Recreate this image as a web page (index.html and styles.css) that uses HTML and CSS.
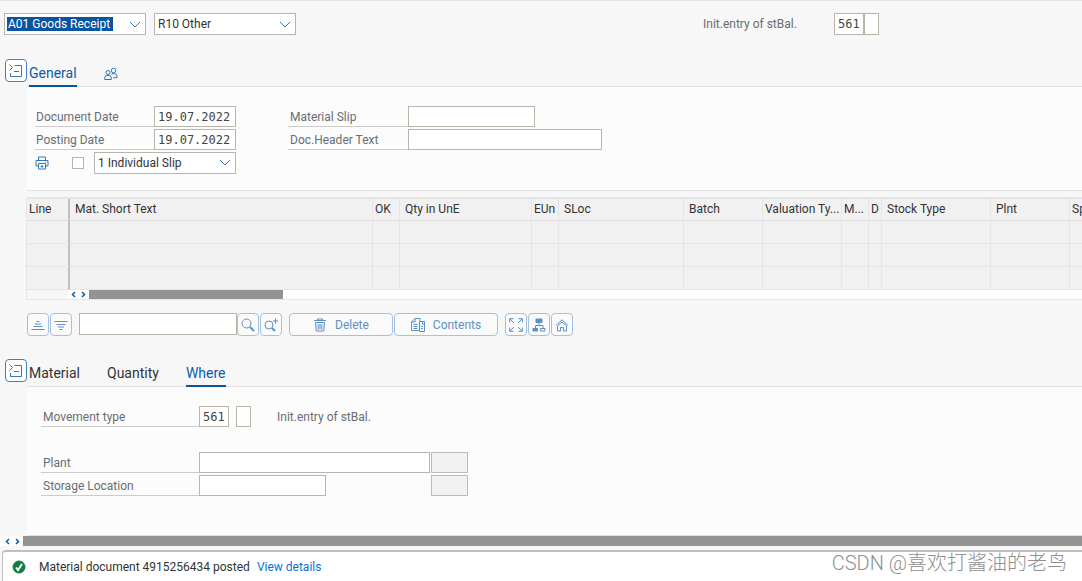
FILE: index.html
```
<!DOCTYPE html>
<html lang="en">
<head>
    <meta charset="UTF-8">
    <meta name="viewport" content="width=device-width, initial-scale=1.0">
    <title>Goods Receipt</title>
    <link rel="stylesheet" href="styles.css">
</head>
<body>
    <header class="topbar">
        <select class="dropdown selected" aria-label="Transaction">
            <option>A01 Goods Receipt</option>
        </select>
        <select class="dropdown" aria-label="Reference">
            <option>R10 Other</option>
        </select>
        <div class="movement">
            <label for="mvt">Init.entry of stBal.</label>
            <input type="text" class="field code" id="mvt" value="561">
            <input type="text" class="field flag" aria-label="Special stock">
        </div>
    </header>

    <!-- Header data -->
    <section class="section">
        <button class="toggle" aria-label="Collapse header">
            <svg width="16" height="16" viewBox="0 0 16 16"><path d="M1.500 1.500l3 3-3 3M6.500 2.500h7v11h-11V10M6 8.500h5"/></svg>
        </button>
        <div class="content">
            <nav class="tabs">
                <a href="#" class="tab active">General</a>
                <a href="#" class="tab icon-tab" aria-label="Partners">
                    <svg width="14" height="14" viewBox="0 0 14 14"><circle cx="9.500" cy="3.500" r="2.300"/><circle cx="4" cy="5.500" r="2"/><path d="M.7 12.500V11q0-2.500 2.300-2.500h2Q7.300 8.500 7.300 11v1.500zM7.300 7.500q.5-.8 1.700-.8h1.500q2.500 0 2.500 2.500v1.500H9"/></svg>
                </a>
            </nav>
            <div class="panel general">
                <div class="column">
                    <div class="row"><label class="lbl" for="docdate">Document Date</label><input type="text" class="field date" id="docdate" value="19.07.2022"></div>
                    <div class="row"><label class="lbl" for="postdate">Posting Date</label><input type="text" class="field date" id="postdate" value="19.07.2022"></div>
                    <div class="row print">
                        <svg width="14" height="14" viewBox="0 0 14 14"><path d="M3.500 4V1h7v3M3.500 10H1V4.500h12V10h-2.500M3.500 7.500h7v5.500h-7zM6 10h2v1H6zM10.500 6.200h1"/></svg>
                        <input type="checkbox" class="check" aria-label="Print">
                        <select class="dropdown" aria-label="Slip type">
                            <option>1 Individual Slip</option>
                        </select>
                    </div>
                </div>
                <div class="column texts">
                    <div class="row"><label class="lbl" for="slip">Material Slip</label><input type="text" class="field medium" id="slip"></div>
                    <div class="row"><label class="lbl" for="htext">Doc.Header Text</label><input type="text" class="field long" id="htext"></div>
                </div>
            </div>
        </div>
    </section>

    <!-- Item overview -->
    <section class="items">
        <div class="grid">
            <table>
                <thead>
                    <tr>
                        <th class="line">Line</th><th class="text">Mat. Short Text</th><th class="tiny">OK</th><th class="qty">Qty in UnE</th><th class="tiny">EUn</th><th class="sloc">SLoc</th><th class="mid">Batch</th><th class="mid near">Valuation Ty...</th><th class="tiny">M...</th><th class="one">D</th><th class="stock">Stock Type</th><th class="mid">Plnt</th><th class="tiny last">Sp</th>
                    </tr>
                </thead>
                <tbody>
                    <tr><td></td><td></td><td></td><td></td><td></td><td></td><td></td><td></td><td></td><td></td><td></td><td></td><td></td></tr>
                    <tr><td></td><td></td><td></td><td></td><td></td><td></td><td></td><td></td><td></td><td></td><td></td><td></td><td></td></tr>
                    <tr><td></td><td></td><td></td><td></td><td></td><td></td><td></td><td></td><td></td><td></td><td></td><td></td><td></td></tr>
                </tbody>
            </table>
            <div class="scroll">
                <button class="arrow" aria-label="Scroll left"><svg width="5" height="7" viewBox="0 0 5 7"><path d="M4 1L1.500 3.500 4 6"/></svg></button>
                <button class="arrow" aria-label="Scroll right"><svg width="5" height="7" viewBox="0 0 5 7"><path d="M1 1l2.500 2.500L1 6"/></svg></button>
                <div class="thumb"></div>
            </div>
        </div>
        <div class="toolbar">
            <div class="group">
                <button class="btn" aria-label="Sort ascending"><svg width="14" height="14" viewBox="0 0 14 14"><path d="M5.500 3.500h3M4 6h6M2.500 8.500h9M.5 11.500h13"/></svg></button>
                <button class="btn" aria-label="Sort descending"><svg width="14" height="14" viewBox="0 0 14 14"><path d="M.5 3.500h13M2.500 6.500h9M4 9h6M5.500 11.500h3"/></svg></button>
            </div>
            <div class="group">
                <input type="text" class="field search" aria-label="Search">
                <button class="btn" aria-label="Find"><svg width="14" height="14" viewBox="0 0 14 14"><circle cx="5.500" cy="5.500" r="4.500"/><path class="thick" d="M9 9l4 4"/></svg></button>
                <button class="btn" aria-label="Find next"><svg width="14" height="14" viewBox="0 0 14 14"><circle cx="5" cy="7" r="4"/><path class="thick" d="M8 10l3 3"/><path d="M11.500 .5v5M9 3h5"/></svg></button>
            </div>
            <div class="group">
                <button class="btn wide"><svg width="14" height="14" viewBox="0 0 14 14"><path d="M1 2.500h12M4.500 2.500v-1.500h5v1.500M2.500 4.500l.8 8.500h7.400l.8-8.500zM5.200 6v5.500M7 6v5.500M8.800 6v5.500"/></svg>Delete</button>
                <button class="btn wide"><svg width="14" height="14" viewBox="0 0 14 14"><path d="M9 3V.5H4L.5 4v8.500h8M4 .5V4H.5M2.500 6.500h4M2.500 8.500h4M2.500 10.500h4M8.500 3.500h5v10h-5zM11.500 3.500V6h2M10 8.500h2M10 10.500h2"/></svg>Contents</button>
            </div>
            <div class="group">
                <button class="btn" aria-label="Expand"><svg width="14" height="14" viewBox="0 0 14 14"><path d="M.7 4.500V.7h3.800M1 1l4 4M9.500.7h3.800v3.800M13 1L9 5M.7 9.500v3.800h3.800M1 13l4-4M13.300 9.500v3.800H9.500M13 13L9 9"/></svg></button>
                <button class="btn" aria-label="Hierarchy"><svg width="14" height="14" viewBox="0 0 14 14"><path class="fill" d="M4 1h6v3.500H4zM1 10.500h4.500v2.500H1z"/><path d="M7 5v2.500M3.500 10V7.500h7.500V10M8.500 10.500h4.500v2.500h-4.500z"/></svg></button>
                <button class="btn" aria-label="Home"><svg width="14" height="14" viewBox="0 0 14 14"><path d="M.8 7.500L7 1.800l6.200 5.700M2.500 8v5h3V9.500h3V13h3V8L7 4z"/></svg></button>
            </div>
        </div>
    </section>

    <!-- Item detail -->
    <section class="section detail">
        <button class="toggle" aria-label="Collapse detail">
            <svg width="16" height="16" viewBox="0 0 16 16"><path d="M1.500 1.500l3 3-3 3M6.500 2.500h7v11h-11V10M6 8.500h5"/></svg>
        </button>
        <div class="content">
            <nav class="tabs">
                <a href="#" class="tab">Material</a>
                <a href="#" class="tab">Quantity</a>
                <a href="#" class="tab active">Where</a>
            </nav>
            <div class="panel where">
                <div class="row spaced">
                    <label class="lbl" for="itemmvt">Movement type</label><input type="text" class="field code" id="itemmvt" value="561">
                    <input type="text" class="field flag" aria-label="Item special stock">
                    <span class="note">Init.entry of stBal.</span>
                </div>
                <div class="row">
                    <label class="lbl" for="plant">Plant</label>
                    <div class="slot"><input type="text" class="field full" id="plant"></div>
                    <input type="text" class="field key" aria-label="Plant key" readonly>
                </div>
                <div class="row">
                    <label class="lbl" for="storage">Storage Location</label>
                    <div class="slot"><input type="text" class="field medium" id="storage"></div>
                    <input type="text" class="field key" aria-label="Storage location key" readonly>
                </div>
            </div>
        </div>
    </section>

    <div class="scroll page-scroll">
        <button class="arrow" aria-label="Scroll page left"><svg width="5" height="7" viewBox="0 0 5 7"><path d="M4 1L1.500 3.500 4 6"/></svg></button>
        <button class="arrow" aria-label="Scroll page right"><svg width="5" height="7" viewBox="0 0 5 7"><path d="M1 1l2.500 2.500L1 6"/></svg></button>
        <div class="thumb"></div>
    </div>

    <footer class="status">
        <svg width="14" height="14" viewBox="0 0 14 14"><circle cx="7" cy="7" r="6"/><path d="M4 7.500l2 2.500 4-6"/></svg>
        <span>Material document 4915256434 posted</span>
        <a href="#">View details</a>
        <div class="watermark">CSDN @喜欢打酱油的老鸟</div>
    </footer>
</body>
</html>
```

FILE: styles.css
```
* {
    box-sizing: border-box;
}
body {
    margin: 0;
    min-height: 100vh;
    display: flex;
    flex-direction: column;
    overflow-x: hidden;
    background-color: #f7f7f7;
    color: #333;
    font-family: Roboto, "Liberation Sans", sans-serif;
    font-size: 12px;
    line-height: 16px;
}
button, input, select {
    font: inherit;
    color: inherit;
    margin: 0;
    padding: 0;
}
button {
    cursor: pointer;
}
a {
    text-decoration: none;
}
svg {
    display: block;
    flex: none;
    fill: none;
    stroke: currentColor;
}

/* form fields */
.field {
    height: 21px;
    padding: 0 3px;
    border: 1px solid #bab5aa;
    background: #fff;
    color: #444;
    font-family: "DejaVu Sans Mono", monospace;
}
.dropdown {
    appearance: none;
    width: 142px;
    height: 22px;
    padding: 0 3px;
    border: 1px solid #bab5aa;
    border-radius: 0;
    background: #fff url("data:image/svg+xml,%3Csvg xmlns='http://www.w3.org/2000/svg' width='12' height='7' fill='none' stroke='%233a78bd'%3E%3Cpath d='M1 1l5 5 5-5'/%3E%3C/svg%3E") no-repeat right 4px center;
}
.selected {
    color: #fff;
    background-image: url("data:image/svg+xml,%3Csvg xmlns='http://www.w3.org/2000/svg' width='12' height='7' fill='none' stroke='%233a78bd'%3E%3Cpath d='M1 1l5 5 5-5'/%3E%3C/svg%3E"), linear-gradient(#0854a0, #0854a0);
    background-position: right 4px center, 2px 3px;
    background-size: 12px 7px, 106px 14px;
}
.code {
    width: 30px;
}
.flag {
    width: 15px;
}
.date {
    width: 82px;
}
.medium {
    width: 127px;
}
.long {
    width: 194px;
}
.full {
    width: 100%;
}
.key {
    width: 37px;
    border-color: #b8bcc0;
    background: #f2f2f2;
}
.check {
    appearance: none;
    width: 12px;
    height: 12px;
    border: 1px solid #b5b5b5;
    background: #fff;
}

.topbar {
    display: flex;
    align-items: center;
    gap: 8px;
    height: 58px;
    padding: 0 4px 11px;
    border-top: 1px solid #e2e2e2;
}
.movement {
    display: flex;
    align-items: center;
    margin-left: 399px;
    color: #6a6d70;
}
.movement label {
    width: 131px;
}
.movement .field {
    height: 22px;
}

/* tabbed sections */
.section {
    display: flex;
    align-items: flex-start;
    padding: 1px 0 0 5px;
}
.toggle {
    display: flex;
    align-items: center;
    justify-content: center;
    flex: none;
    width: 22px;
    height: 23px;
    border: 1px solid #4080be;
    border-radius: 4px;
    background: #fff;
    color: #3576b8;
}
.content {
    flex: 1;
    min-width: 0;
}
.tabs {
    display: flex;
    gap: 27px;
    height: 28px;
    padding-left: 2px;
    border-bottom: 1px solid #e0e0e0;
}
.tab {
    height: 28px;
    padding-top: 6px;
    color: #333;
    font-size: 14px;
}
.active {
    border-bottom: 2px solid #0854a0;
    color: #0a5cab;
}
.icon-tab {
    padding-top: 8px;
    color: #3576b8;
}
.panel {
    background: #fcfcfc;
    border-bottom: 1px solid #e2e2e2;
}
.row {
    display: flex;
    height: 21px;
    margin-bottom: 2px;
}
.lbl {
    width: 119px;
    padding: 3px 1px 0;
    border-bottom: 1px solid #ccc;
    color: #6a6d70;
}
.general {
    display: flex;
    gap: 52px;
    padding: 19px 8px 15px;
}
.texts .lbl {
    width: 120px;
    padding-left: 2px;
}
.print {
    align-items: center;
    color: #3576b8;
}
.print svg {
    margin-right: 23px;
}
.print .dropdown {
    margin-left: 10px;
    color: #333;
}

/* item table */
.items {
    padding: 6px 0 0 26px;
}
.grid {
    overflow: hidden;
    border: 1px solid #e5e5e5;
    border-width: 2px 0 1px 1px;
}
table {
    width: 1110px;
    table-layout: fixed;
    border-spacing: 0;
    background: #f1f1f1;
}
th, td {
    height: 23px;
    padding: 0 0 0 5px;
    border-right: 1px solid #e5e5e5;
    border-bottom: 1px solid #e5e5e5;
}
th {
    height: 22px;
    padding-bottom: 2px;
    border-bottom-color: #ddd;
    font-weight: normal;
    text-align: left;
    white-space: nowrap;
    overflow: hidden;
}
th:first-child, td:first-child {
    border-right: 2px solid #bfbfbf;
}
.line {
    width: 43px;
    padding-left: 2px;
}
.text {
    width: 303px;
}
.tiny {
    width: 27px;
    padding-left: 2px;
}
.qty {
    width: 132px;
}
.sloc {
    width: 125px;
}
.mid {
    width: 79px;
}
.near {
    padding-left: 2px;
}
.one {
    width: 13px;
    padding-left: 2px;
}
.stock {
    width: 109px;
}
.last {
    width: auto;
}
.scroll {
    display: flex;
    height: 10px;
    background: #fff;
}
.grid .scroll {
    height: 9px;
    margin-left: 41px;
}
.arrow {
    display: flex;
    align-items: center;
    justify-content: center;
    width: 10px;
    border: none;
    background: #fff;
    color: #0a66c2;
}
.arrow path {
    stroke: #0a5cab;
    stroke-width: 1.5;
}
.thumb {
    width: 194px;
    margin-left: 1px;
    background: #939393;
}

.toolbar {
    display: flex;
    gap: 7px;
    padding: 13px 0 0 1px;
}
.group {
    display: flex;
    gap: 1px;
}
.search {
    width: 158px;
    height: 22px;
    margin-right: -1px;
}
.btn {
    display: flex;
    align-items: center;
    justify-content: center;
    gap: 8px;
    width: 22px;
    height: 23px;
    border: 1px solid #a3c1e0;
    border-radius: 4px;
    background: #fafafa;
    color: #5c91c7;
}
.wide {
    width: 104px;
}
.thick {
    stroke-width: 2;
}
.fill {
    fill: currentColor;
}

/* item detail */
.detail {
    flex: 1;
    align-items: stretch;
    padding-top: 23px;
}
.detail .content {
    display: flex;
    flex-direction: column;
}
.where {
    flex: 1;
    padding: 19px 14px;
}
.where .lbl {
    width: 158px;
    padding-left: 2px;
}
.spaced {
    margin-bottom: 25px;
}
.spaced .flag {
    margin-left: 7px;
}
.note {
    margin-left: 26px;
    padding-top: 3px;
    color: #6a6d70;
}
.slot {
    width: 231px;
    margin-right: 1px;
}

.page-scroll {
    padding-left: 2px;
}
.page-scroll .thumb {
    flex: 1;
}
.status {
    position: relative;
    display: flex;
    align-items: center;
    height: 31px;
    margin: 4px 0 0 2px;
    padding-left: 9px;
    border: 2px solid #bfbfbf;
    border-width: 2px 0 0 1px;
    border-radius: 4px 0 0 0;
    background: #fff;
}
.status svg {
    margin-right: 13px;
    fill: #107e3e;
    stroke: #107e3e;
}
.status path {
    fill: none;
    stroke: #fff;
    stroke-width: 2;
}
.status a {
    margin-left: 7px;
    color: #0a6ed1;
}
.watermark {
    position: absolute;
    right: 15px;
    bottom: 6px;
    color: #909090;
    font-family: Roboto, "Noto Sans CJK SC", sans-serif;
    font-size: 20px;
    font-weight: 300;
    line-height: 24px;
}
```
